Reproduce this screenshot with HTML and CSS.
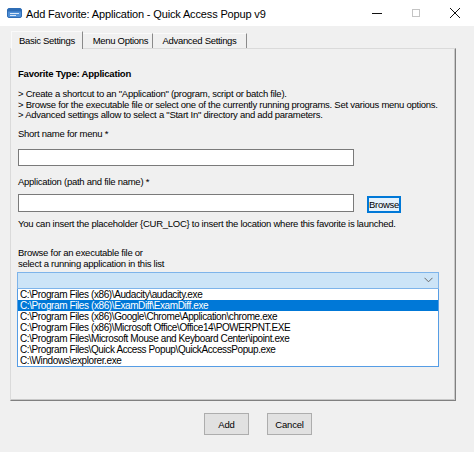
FILE: index.html
```html
<!DOCTYPE html>
<html lang="en">
<head>
  <meta charset="UTF-8" />
  <title>Add Favorite: Application - Quick Access Popup v9</title>
  <link rel="stylesheet" href="styles.css">
</head>
<body>
  <div class="window">
    <div class="titlebar">
      <svg class="app-icon" width="15" height="10" viewBox="0 0 15 10">
        <rect x="0.5" y="0.5" width="14" height="9" rx="1.5" fill="#4f8fd6" stroke="#2f6db5"/>
        <rect x="1" y="1" width="13" height="2.5" fill="#2f6db5"/>
        <rect x="3" y="5" width="9" height="1" fill="#dbe9f8"/>
        <rect x="3" y="7" width="6" height="1" fill="#dbe9f8"/>
      </svg>
      <span class="title">Add Favorite: Application - Quick Access Popup v9</span>
      <div class="controls">
        <span class="ctl">
          <svg width="10" height="10" viewBox="0 0 10 10"><path d="M0 5.5h10" stroke="#111" stroke-width="1"/></svg>
        </span>
        <span class="ctl">
          <svg width="10" height="10" viewBox="0 0 10 10"><rect x="1.5" y="1.5" width="7" height="7" fill="none" stroke="#c4c4c4"/></svg>
        </span>
        <span class="ctl">
          <svg width="12" height="12" viewBox="0 0 12 12"><path d="M1 1l10 10M11 1L1 11" stroke="#111" stroke-width="1"/></svg>
        </span>
      </div>
    </div>

    <div class="dialog">
      <div class="tabs">
        <div class="tab tab-basic active">Basic Settings</div>
        <div class="tab tab-menu">Menu Options</div>
        <div class="tab tab-adv">Advanced Settings</div>
      </div>

      <div class="panel">
        <div class="type-title">Favorite Type: Application</div>
        <div class="intro">
          <div>&gt; Create a shortcut to an "Application" (program, script or batch file).</div>
          <div>&gt; Browse for the executable file or select one of the currently running programs. Set various menu options.</div>
          <div>&gt; Advanced settings allow to select a "Start In" directory and add parameters.</div>
        </div>

        <div class="label label-short">Short name for menu *</div>
        <input class="field" type="text">

        <div class="label label-app">Application (path and file name) *</div>
        <div class="field-row">
          <input class="field" type="text">
          <button class="btn btn-focus">Browse</button>
        </div>
        <div class="hint">You can insert the placeholder {CUR_LOC} to insert the location where this favorite is launched.</div>

        <div class="label label-list">Browse for an executable file or<br>select a running application in this list</div>
        <div class="combo">
          <svg width="9" height="6" viewBox="0 0 9 6"><path d="M0.5 0.8L4.5 4.8L8.5 0.8" fill="none" stroke="#6a6a6a" stroke-width="1"/></svg>
        </div>
        <ul class="dropdown">
          <li>C:\Program Files (x86)\Audacity\audacity.exe</li>
          <li class="selected">C:\Program Files (x86)\ExamDiff\ExamDiff.exe</li>
          <li>C:\Program Files (x86)\Google\Chrome\Application\chrome.exe</li>
          <li>C:\Program Files (x86)\Microsoft Office\Office14\POWERPNT.EXE</li>
          <li>C:\Program Files\Microsoft Mouse and Keyboard Center\ipoint.exe</li>
          <li>C:\Program Files\Quick Access Popup\QuickAccessPopup.exe</li>
          <li>C:\Windows\explorer.exe</li>
        </ul>
      </div>

      <div class="buttons">
        <button class="btn btn-dialog">Add</button>
        <button class="btn btn-dialog">Cancel</button>
      </div>
    </div>
  </div>
</body>
</html>
```

FILE: styles.css
```css
* { box-sizing: border-box; }

body {
  margin: 0;
  font-family: 'Liberation Sans', Arial, sans-serif;
  color: #000;
  background: #f0f0f0;
}

.window {
  width: 474px;
  height: 452px;
  background: #f0f0f0;
  overflow: hidden;
}

/* title bar */
.titlebar {
  height: 26px;
  background: #fff;
  display: flex;
  align-items: center;
}

.app-icon {
  margin: 0 4px 0 7px;
}

.title {
  font-size: 11px;
  letter-spacing: -0.15px;
  margin-top: 1px;
}

.controls {
  margin-left: auto;
  display: flex;
  height: 26px;
}

.ctl {
  width: 39px;
  display: flex;
  align-items: center;
  justify-content: center;
}

/* tabs */
.tabs {
  display: flex;
  align-items: flex-end;
  margin: 5px 0 0 11px;
  height: 17px;
  font-size: 9.5px;
  letter-spacing: -0.3px;
}

.tab {
  height: 15px;
  line-height: 14px;
  text-align: center;
  border-right: 1px solid #8a8a8a;
  border-top: 1px solid #fafafa;
}

.tab-basic { width: 72px; }
.tab-menu { width: 70px; padding-left: 6px; }
.tab-adv { width: 94px; }

.tab.active {
  height: 18px;
  margin-bottom: -1px;
  line-height: 17px;
  background: #f0f0f0;
  position: relative;
  z-index: 1;
  border-left: 1px solid #fafafa;
}

/* panel */
.panel {
  margin: 0 18px 0 10px;
  height: 353px;
  border: 1px solid;
  border-color: #dadada #808080 #808080 #dadada;
  box-shadow: inset -1px -1px 0 #c8c8c8;
  padding: 19px 0 0 7px;
  font-size: 9.5px;
  letter-spacing: -0.26px;
}

.type-title {
  font-weight: bold;
  line-height: 12px;
  letter-spacing: -0.2px;
}

.intro {
  margin-top: 9px;
  line-height: 10.5px;
}

.label {
  margin-top: 8px;
  line-height: 12px;
}

.label-short {
  margin-top: 7px;
}

.label-app {
  margin-top: 10px;
}

.label-list {
  margin-top: 17px;
  line-height: 11px;
}

.field {
  display: block;
  width: 336px;
  height: 17px;
  margin: 9px 0 0;
  border: 1px solid #7a7a7a;
  background: #fff;
  padding: 0;
}

.field-row {
  display: flex;
  align-items: flex-start;
  gap: 13px;
  margin-top: 6px;
}

.field-row .field {
  margin: 0;
  height: 18px;
}

.btn {
  font-family: 'Liberation Sans', Arial, sans-serif;
  font-size: 9.5px;
  letter-spacing: -0.2px;
  color: #000;
  padding: 0;
  background: #e1e1e1;
  border: 1px solid #adadad;
}

.btn-focus {
  margin-top: 2px;
  width: 34px;
  height: 17px;
  background: #e5f1fb;
  border: 2px solid #0078d7;
  letter-spacing: -0.3px;
}

.hint {
  margin-top: 5px;
  line-height: 12px;
}

.combo {
  margin: 3px 0 0 -1px;
  width: 422px;
  height: 17px;
  background: #cce4f7;
  border: 1px solid #7eb4ea;
  display: flex;
  align-items: center;
  justify-content: flex-end;
  padding-right: 5px;
}

.dropdown {
  list-style: none;
  margin: 0 0 0 -1px;
  padding: 0;
  width: 422px;
  height: 78px;
  background: #fff;
  border: 1px solid #569de5;
  border-top: none;
  font-size: 10px;
  letter-spacing: -0.4px;
}

.dropdown li {
  height: 11px;
  line-height: 11px;
  padding-left: 2px;
  white-space: nowrap;
}

.dropdown li.selected {
  background: #0078d7;
  color: #fff;
}

/* dialog buttons */
.buttons {
  display: flex;
  gap: 18px;
  padding-left: 204px;
  margin-top: 12px;
}

.btn-dialog {
  width: 45px;
  height: 22px;
}
```
